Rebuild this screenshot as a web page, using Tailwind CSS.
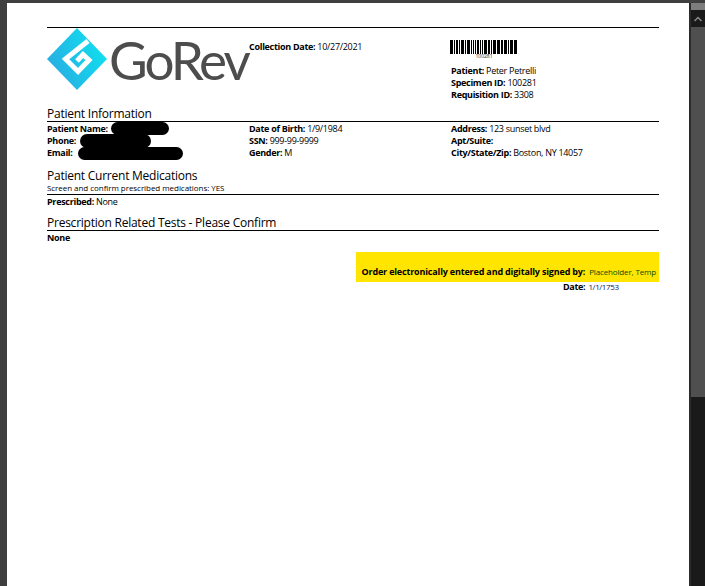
<!DOCTYPE html>
<html lang="en">
<head>
    <meta charset="UTF-8">
    <title>Requisition</title>
    <script src="https://cdn.jsdelivr.net/npm/@tailwindcss/browser@4"></script>
</head>
<body class="w-[705px] h-[586px] overflow-hidden bg-[#3f3f3f] font-['Open_Sans','Noto_Sans',sans-serif] text-black tracking-[-0.3px]">
    <div class="flex h-full pt-[3px] pl-[7px]">
        <!-- page -->
        <div class="w-[682px] h-[583px] bg-white pt-[24px] pl-[40px] pr-[30px]">
            <div class="border-t border-black grid grid-cols-[202px_202px_1fr] h-[83px]">
                <div class="flex items-start">
                    <svg width="60" height="62" viewBox="0 0 60 62" class="shrink-0">
                        <defs>
                            <linearGradient id="logoGrad" x1="0" y1="0.8" x2="1" y2="0.3">
                                <stop offset="0" stop-color="#29a9e1"/>
                                <stop offset="1" stop-color="#0fe1ef"/>
                            </linearGradient>
                        </defs>
                        <path d="M30 0 60 31 30 62 0 31Z" fill="url(#logoGrad)"/>
                        <path d="M41 13 18.500 31 31 43.500 42 32 36 26.500 30 33" fill="none" stroke="#fff" stroke-width="5"/>
                    </svg>
                    <span class="text-[53px] leading-[64px] text-[#4d4d4d] ml-[2px] tracking-[-3px] font-['Lato',sans-serif]">GoRev</span>
                </div>
                <div class="pt-[13px] text-[9px] leading-[12px]"><b>Collection Date:</b> 10/27/2021</div>
                <div class="pt-[12px] text-[9px] leading-[12px]">
                    <div class="flex h-[14px] items-stretch gap-[1px] w-[68px] -ml-[1px]">
                        <i class="w-[3px] shrink-0 bg-black"></i><i class="w-[1px] shrink-0 bg-black"></i><i class="w-[2px] shrink-0 bg-black"></i><i class="w-[1px] shrink-0 bg-black"></i><i class="w-[3px] shrink-0 bg-black"></i><i class="w-[1px] shrink-0 bg-black"></i><i class="w-[3px] shrink-0 bg-black"></i><i class="w-[1px] shrink-0 bg-black"></i><i class="w-[1px] shrink-0 bg-black"></i><i class="w-[1px] shrink-0 bg-black"></i><i class="w-[2px] shrink-0 bg-black"></i><i class="w-[1px] shrink-0 bg-black"></i><i class="w-[1px] shrink-0 bg-black"></i><i class="w-[3px] shrink-0 bg-black"></i><i class="w-[2px] shrink-0 bg-black"></i><i class="w-[1px] shrink-0 bg-black"></i><i class="w-[3px] shrink-0 bg-black"></i><i class="w-[3px] shrink-0 bg-black"></i><i class="w-[2px] shrink-0 bg-black"></i><i class="w-[3px] shrink-0 bg-black"></i><i class="w-[1px] shrink-0 bg-black"></i><i class="w-[3px] shrink-0 bg-black"></i><i class="w-[3px] shrink-0 bg-black"></i>
                    </div>
                    <div class="w-[66px] text-center text-[5px] leading-[5px] text-[#222] tracking-normal">100281</div>
                    <div class="mt-[6px]"><b>Patient:</b> Peter Petrelli</div>
                    <div><b>Specimen ID:</b> 100281</div>
                    <div><b>Requisition ID:</b> 3308</div>
                </div>
            </div>
            <h2 class="text-[12px] leading-[16px] -mt-[4px] -mb-[1px] tracking-[-0.24px]">Patient Information</h2>
            <div class="relative border-t border-black grid grid-cols-[202px_202px_1fr] text-[9px] leading-[12px] pt-[1px]">
                <div><b>Patient Name:</b><br><b>Phone:</b><br><b>Email:</b></div>
                <div><b>Date of Birth:</b> 1/9/1984<br><b>SSN:</b> 999-99-9999<br><b>Gender:</b> M</div>
                <div><b>Address:</b> 123 sunset blvd<br><b>Apt/Suite:</b><br><b>City/State/Zip:</b> Boston, NY 14057</div>
                <!-- redactions -->
                <span class="absolute left-[64px] top-0 w-[58px] h-[13px] rounded-full bg-black"></span>
                <span class="absolute left-[33px] top-[12px] w-[71px] h-[14px] rounded-full bg-black"></span>
                <span class="absolute left-[31px] top-[25px] w-[105px] h-[13px] rounded-full bg-black"></span>
            </div>
            <h2 class="text-[12px] leading-[14px] mt-[10px] tracking-[-0.24px]">Patient Current Medications</h2>
            <div class="text-[8px] leading-[10px] mb-[1px] tracking-[-0.05px]">Screen and confirm prescribed medications: YES</div>
            <div class="border-t border-black text-[9px] leading-[14px]"><b>Prescribed:</b> None</div>
            <h2 class="text-[12px] leading-[14px] mt-[7px] tracking-[-0.24px]">Prescription Related Tests - Please Confirm</h2>
            <div class="border-t border-black text-[9px] leading-[14px]"><b>None</b></div>
            <div class="ml-[309px] mt-[7px] h-[30px] bg-[#ffe500] flex items-end justify-end pr-[3px] pb-[4px] text-[9px] leading-[12px] whitespace-nowrap">
                <b class="tracking-[-0.17px]">Order electronically entered and digitally signed by:</b>
                <span class="text-[8px] text-[#064d06] ml-[4px] tracking-[-0.15px]">Placeholder, Temp</span>
            </div>
            <div class="ml-[516px] -mt-[1px] text-[9px] leading-[12px] whitespace-nowrap"><b>Date:</b> <span class="text-[8px] text-[#0b1a5c] ml-[1px] tracking-[-0.4px]">1/1/1753</span></div>
        </div>
        <!-- scrollbar -->
        <div class="w-[2px] bg-[#2b2b2b]"></div>
        <div class="flex-1 flex flex-col">
            <div class="h-[7px] bg-[#7d7d7d]"></div>
            <div class="h-[17px] bg-[#1a1a1a] flex items-center justify-center">
                <svg width="8" height="6" viewBox="0 0 8 6"><path d="M.5 5 4 1.500 7.500 5" fill="none" stroke="#8a8a8a" stroke-width="1.500"/></svg>
            </div>
            <div class="h-[370px] bg-[#4f4f4f]"></div>
            <div class="flex-1 bg-[#1a1a1a]"></div>
        </div>
    </div>
</body>
</html>
